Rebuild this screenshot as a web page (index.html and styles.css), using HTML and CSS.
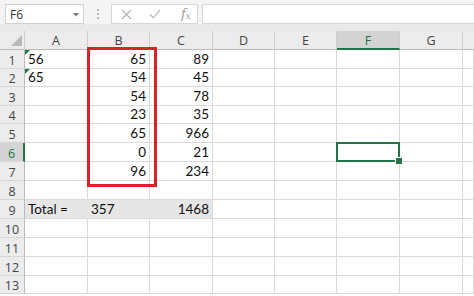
FILE: index.html
```html
<!DOCTYPE html>
<html>
<head>
<meta charset="utf-8">
<link rel="stylesheet" href="styles.css">
</head>
<body>
<div class="app">
  <div class="fbar">
    <div class="namebox"><span>F6</span><svg class="caret" width="6" height="4" viewBox="0 0 6 4"><path d="M0 0H6L3 3.5Z" fill="#777"/></svg></div>
    <div class="grip"><i></i><i></i><i></i></div>
    <div class="fxbox">
      <svg class="ico" width="11" height="11" viewBox="0 0 11 11"><path d="M1 1L10 10M10 1L1 10" stroke="#b0b0b0" stroke-width="1.1" fill="none"/></svg>
      <svg class="ico" width="12" height="10" viewBox="0 0 12 10"><path d="M1 5.5L4.3 8.8L11 1.2" stroke="#b0b0b0" stroke-width="1.1" fill="none"/></svg>
      <span class="fx">f<sub>x</sub></span>
    </div>
    <div class="finput"></div>
  </div>
  <div class="strip"></div>
  <div class="sheet">
    <div class="grid">
      <div class="corner"><svg width="11" height="11" viewBox="0 0 11 11"><path d="M11 0V11H0Z" fill="#b9b9b9"/></svg></div>
      <div class="ch">A</div><div class="ch">B</div><div class="ch">C</div><div class="ch">D</div><div class="ch">E</div><div class="ch sel">F</div><div class="ch">G</div><div class="ch last"></div>

      <div class="rh">1</div><div class="c t">56</div><div class="c n">65</div><div class="c n">89</div><div class="c"></div><div class="c"></div><div class="c"></div><div class="c"></div><div class="c"></div>
      <div class="rh">2</div><div class="c t">65</div><div class="c n">54</div><div class="c n">45</div><div class="c"></div><div class="c"></div><div class="c"></div><div class="c"></div><div class="c"></div>
      <div class="rh">3</div><div class="c"></div><div class="c n">54</div><div class="c n">78</div><div class="c"></div><div class="c"></div><div class="c"></div><div class="c"></div><div class="c"></div>
      <div class="rh">4</div><div class="c"></div><div class="c n">23</div><div class="c n">35</div><div class="c"></div><div class="c"></div><div class="c"></div><div class="c"></div><div class="c"></div>
      <div class="rh">5</div><div class="c"></div><div class="c n">65</div><div class="c n">966</div><div class="c"></div><div class="c"></div><div class="c"></div><div class="c"></div><div class="c"></div>
      <div class="rh sel">6</div><div class="c"></div><div class="c n">0</div><div class="c n">21</div><div class="c"></div><div class="c"></div><div class="c active"></div><div class="c"></div><div class="c"></div>
      <div class="rh">7</div><div class="c"></div><div class="c n">96</div><div class="c n">234</div><div class="c"></div><div class="c"></div><div class="c"></div><div class="c"></div><div class="c"></div>
      <div class="rh">8</div><div class="c"></div><div class="c"></div><div class="c"></div><div class="c"></div><div class="c"></div><div class="c"></div><div class="c"></div><div class="c"></div>
      <div class="rh">9</div><div class="c tot join">Total =</div><div class="c tot join">357</div><div class="c n tot">1468</div><div class="c"></div><div class="c"></div><div class="c"></div><div class="c"></div><div class="c"></div>
      <div class="rh">10</div><div class="c"></div><div class="c"></div><div class="c"></div><div class="c"></div><div class="c"></div><div class="c"></div><div class="c"></div><div class="c"></div>
      <div class="rh">11</div><div class="c"></div><div class="c"></div><div class="c"></div><div class="c"></div><div class="c"></div><div class="c"></div><div class="c"></div><div class="c"></div>
      <div class="rh">12</div><div class="c"></div><div class="c"></div><div class="c"></div><div class="c"></div><div class="c"></div><div class="c"></div><div class="c"></div><div class="c"></div>
      <div class="rh">13</div><div class="c"></div><div class="c"></div><div class="c"></div><div class="c"></div><div class="c"></div><div class="c"></div><div class="c"></div><div class="c"></div>
    </div>
    <div class="redbox"></div>
  </div>
</div>
</body>
</html>
```

FILE: styles.css
```css
* { box-sizing: border-box; }
html, body { margin: 0; padding: 0; }
body { width: 474px; height: 296px; overflow: hidden; background: #fff; }

.app { width: 474px; height: 296px; overflow: hidden; }

.fbar {
  height: 24px;
  background: #f4f4f4;
  display: flex;
  align-items: flex-start;
  padding: 4px 0 0 5px;
}
.namebox {
  width: 79px;
  height: 20px;
  background: #fff;
  border: 1px solid #d2d2d2;
  display: flex;
  align-items: center;
  justify-content: space-between;
  padding: 0 4px 0 4px;
  font-family: "Open Sans", sans-serif;
  font-size: 12px;
  color: #333;
}
.caret { margin-top: 1px; }
.grip {
  width: 27px;
  height: 20px;
  display: flex;
  flex-direction: column;
  align-items: center;
  justify-content: center;
  gap: 2px;
}
.grip i { display: block; width: 2px; height: 2px; background: #b8b8b8; }
.fxbox {
  width: 87px;
  height: 20px;
  background: #fff;
  border: 1px solid #d8d8d8;
  display: flex;
  align-items: center;
  padding-left: 9px;
}
.fxbox .ico { margin-right: 17px; }
.fxbox .ico + .ico { margin-right: 20px; }
.fx {
  font-family: "DejaVu Serif", serif;
  font-style: italic;
  font-size: 13px;
  color: #9c9c9c;
  line-height: 1;
}
.fx sub { font-size: 9px; vertical-align: -1px; }
.finput {
  flex: 1;
  margin-left: 4px;
  height: 20px;
  background: #fff;
  border: 1px solid #d8d8d8;
  border-right: none;
}

.strip { height: 7px; background: #e9e9e9; }

.sheet { position: relative; }
.grid {
  display: grid;
  grid-template-columns: 25px 63px 62px 63px 62px 62px 63px 63px 11px;
  grid-template-rows: 19px 19px 18px 19px 18px 19px 19px 19px 19px 19px 19px 19px 19px 18px;
}

.corner {
  background: #ececec;
  border-right: 1px solid #cfcfcf;
  border-bottom: 1px solid #bcbcbc;
  display: flex;
  align-items: flex-end;
  justify-content: flex-end;
  padding: 0 2px 3px 0;
}
.corner svg { display: block; }
.ch {
  background: #ececec;
  border-right: 1px solid #cfcfcf;
  border-bottom: 1px solid #bcbcbc;
  font-family: "Open Sans", sans-serif;
  font-size: 12.5px;
  color: #444;
  display: flex;
  align-items: center;
  justify-content: center;
  padding-top: 1px;
}
.ch.last { border-right: none; }
.ch.sel {
  background: #d3d3d3;
  border-bottom: 2px solid #217346;
  color: #217346;
}
.rh {
  background: #ececec;
  border-right: 1px solid #bcbcbc;
  border-bottom: 1px solid #d6d6d6;
  font-family: "Open Sans", sans-serif;
  font-size: 12.5px;
  color: #444;
  display: flex;
  align-items: center;
  justify-content: center;
  padding-top: 2px;
}
.rh.sel {
  background: #d3d3d3;
  border-right: 2px solid #217346;
  color: #217346;
}

.c {
  position: relative;
  border-right: 1px solid #d9d9d9;
  border-bottom: 1px solid #d9d9d9;
  font-family: Lato, "Open Sans", sans-serif;
  font-size: 13.5px;
  color: #111;
  display: flex;
  align-items: flex-end;
  padding: 0 3px 1px 3px;
  line-height: 16px;
  white-space: nowrap;
}
.c.n { justify-content: flex-end; }
.c.t::before {
  content: "";
  position: absolute;
  left: 0;
  top: 0;
  border-top: 5px solid #1f7a46;
  border-right: 5px solid transparent;
}
.c.tot { background: #e6e6e6; }
.c.join { border-right-color: #e6e6e6; }
.c.active::after {
  content: "";
  position: absolute;
  left: -1px;
  top: -1px;
  right: -1px;
  bottom: -1px;
  border: 2px solid #217346;
}
.c.active::before {
  content: "";
  position: absolute;
  right: -4px;
  bottom: -4px;
  width: 6px;
  height: 6px;
  background: #217346;
  border: 1px solid #fff;
  z-index: 2;
}

.redbox {
  position: absolute;
  left: 87px;
  top: 16px;
  width: 70px;
  height: 140px;
  border: 3px solid #d9232c;
  pointer-events: none;
}
```
